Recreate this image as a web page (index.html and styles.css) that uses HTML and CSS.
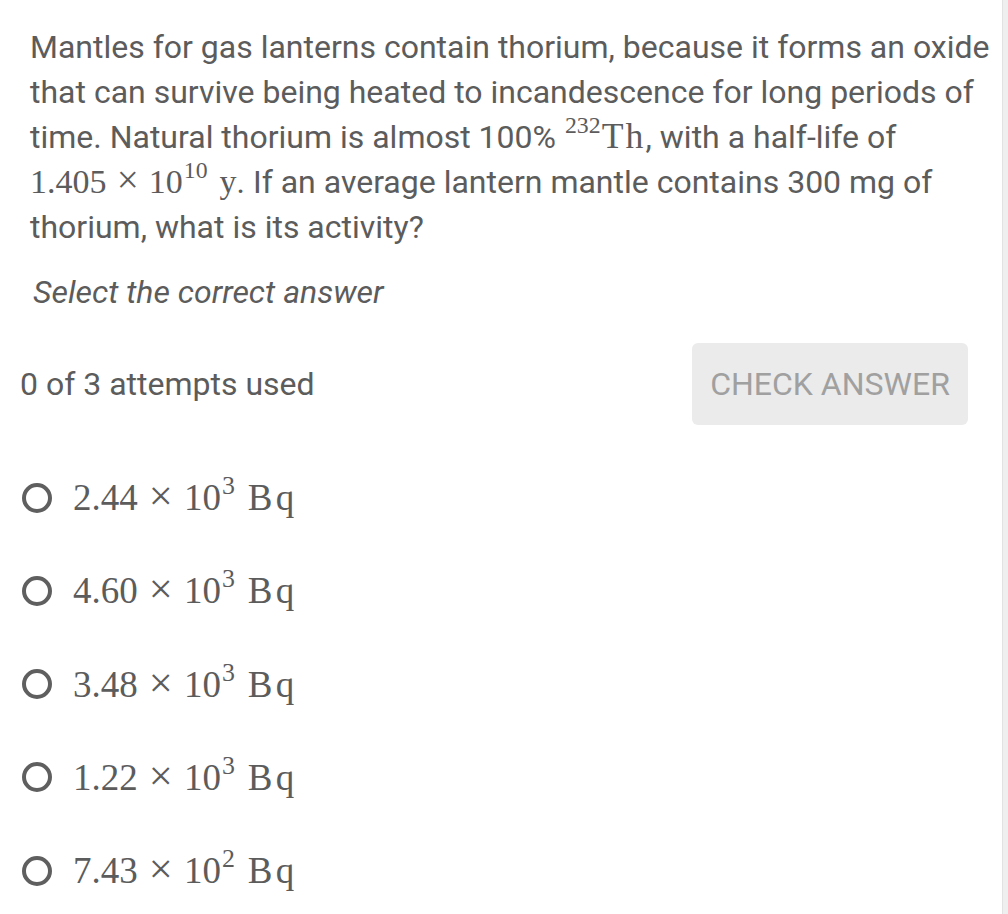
FILE: index.html
```html
<!DOCTYPE html>
<html>
<head>
<meta charset="utf-8">
<link rel="stylesheet" href="styles.css">
</head>
<body>
<div class="page">
  <main class="content">
    <p class="question">Mantles for gas lanterns contain thorium, because it forms an oxide that can survive being heated to incandescence for long periods of time. Natural thorium is almost 100% <span class="math"><sup>232</sup><span class="sym">Th</span></span>, with a half-life of <span class="math">1.405<span class="times">×</span>10<sup>10</sup><span class="unit">y</span></span>. If an average lantern mantle contains 300 mg of thorium, what is its activity?</p>
    <p class="prompt">Select the correct answer</p>
    <div class="attempts-row">
      <span class="attempts">0 of 3 attempts used</span>
      <button class="check">CHECK ANSWER</button>
    </div>
    <ul class="options">
      <li class="option"><span class="radio"></span><span class="math opt">2.44<span class="times">×</span>10<sup>3</sup><span class="unit">Bq</span></span></li>
      <li class="option"><span class="radio"></span><span class="math opt">4.60<span class="times">×</span>10<sup>3</sup><span class="unit">Bq</span></span></li>
      <li class="option"><span class="radio"></span><span class="math opt">3.48<span class="times">×</span>10<sup>3</sup><span class="unit">Bq</span></span></li>
      <li class="option"><span class="radio"></span><span class="math opt">1.22<span class="times">×</span>10<sup>3</sup><span class="unit">Bq</span></span></li>
      <li class="option"><span class="radio"></span><span class="math opt">7.43<span class="times">×</span>10<sup>2</sup><span class="unit">Bq</span></span></li>
    </ul>
  </main>
  <div class="scrollbar"></div>
</div>
</body>
</html>
```

FILE: styles.css
```css
html, body {
  margin: 0;
  padding: 0;
  background: #ffffff;
}
body {
  font-family: Roboto, "Liberation Sans", sans-serif;
  color: #5c5c5c;
}
.page {
  display: flex;
  width: 1008px;
  height: 914px;
  overflow: hidden;
}
.content {
  flex: 1;
  min-width: 0;
}
.scrollbar {
  width: 5px;
  background: #efefef;
  border-left: 1px solid #e2e2e2;
}
.question {
  margin: 0;
  padding: 25px 8px 0 30px;
  font-size: 32px;
  line-height: 45px;
}
.math {
  font-family: "Liberation Serif", "DejaVu Serif", serif;
  font-size: 34px;
  line-height: 1;
  white-space: nowrap;
}
.math sup {
  font-size: 0.7em;
  line-height: 0;
  vertical-align: 0.62em;
  margin-left: 1px;
}
.times {
  font-size: 1.15em;
  line-height: 0;
  margin: 0 0.26em;
}
.unit {
  margin-left: 0.35em;
}
.sym {
  font-size: 1.05em;
  letter-spacing: 0.06em;
  margin-left: 1px;
}
.prompt {
  margin: 20px 0 0;
  padding: 0 0 0 33px;
  font-size: 32px;
  font-style: italic;
  line-height: 45px;
}
.attempts-row {
  display: flex;
  justify-content: space-between;
  align-items: center;
  padding: 28px 34px 0 20px;
}
.attempts {
  font-size: 32px;
}
.check {
  width: 276px;
  height: 82px;
  border: none;
  border-radius: 6px;
  background: #ebebeb;
  color: #a0a0a0;
  font-family: Roboto, "Liberation Sans", sans-serif;
  font-size: 32px;
  padding: 0;
}
.options {
  list-style: none;
  margin: 0;
  padding: 26px 0 0 22px;
}
.option {
  display: flex;
  align-items: center;
  height: 93.25px;
  margin: 0;
}
.radio {
  box-sizing: border-box;
  width: 30px;
  height: 30px;
  border: 4px solid #5f5f5f;
  border-radius: 50%;
  margin-right: 21px;
  flex: none;
}
.opt {
  font-size: 37px;
}
.opt .unit {
  letter-spacing: 0.09em;
}
```
